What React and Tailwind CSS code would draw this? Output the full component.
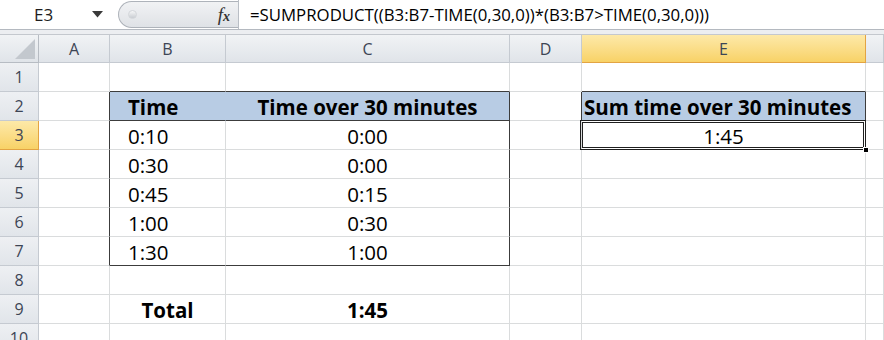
import React from 'react';

const GRID = 'border-[#dadcdd]';

// column letters shown in the header strip
const colHeads = ['A', 'B', 'C', 'D', 'E', ''];

const rows = [
  { n: 1 },
  { n: 2, b: 'Time', c: 'Time over 30 minutes', e: 'Sum time over 30 minutes' },
  { n: 3, b: '0:10', c: '0:00', e: '1:45' },
  { n: 4, b: '0:30', c: '0:00' },
  { n: 5, b: '0:45', c: '0:15' },
  { n: 6, b: '1:00', c: '0:30' },
  { n: 7, b: '1:30', c: '1:00' },
  { n: 8 },
  { n: 9, total: true },
  { n: 10 },
];

function Cell({ className = '', children }) {
  return (
    <div className={`h-[29px] pt-[2px] border-r border-b flex items-center overflow-visible whitespace-nowrap text-[20.5px] text-black ${className}`}>
      {children}
    </div>
  );
}

function FormulaBar() {
  return (
    <div className="h-[30px] flex bg-white border-b border-[#b4b9c0]">
      <div className="w-[112px] flex items-center text-[17px] text-[#1e1e1e]">
        <span className="ml-[34px]">E3</span>
        <svg className="ml-[39px]" width="11" height="7" viewBox="0 0 11 7">
          <path d="M0 0 L11 0 L5.5 6.5 Z" fill="#3a3a3a" />
        </svg>
      </div>
      <div className="ml-[6px] mt-[1px] h-[27px] w-[120px] rounded-l-[14px] border border-r-0 border-[#aeb3ba] bg-gradient-to-b from-[#f1f2f4] to-[#dfe2e6] flex items-center">
        <div className="ml-[9px] w-[9px] h-[9px] rounded-full bg-gradient-to-b from-[#f6f7f8] to-[#c9cdd2] border border-[#d3d6da]" />
        <span className="ml-auto mr-[8px] font-['Liberation_Serif',serif] italic text-[19px] text-[#333] leading-none">
          f<span className="text-[14px] font-bold">x</span>
        </span>
      </div>
      <div className="flex-1 flex items-center border-l border-[#b9bec5] pl-[11px] text-[16.8px] text-black whitespace-nowrap">
        =SUMPRODUCT((B3:B7-TIME(0,30,0))*(B3:B7&gt;TIME(0,30,0)))
      </div>
    </div>
  );
}

export default function App() {
  return (
    <div className="w-[884px] h-[340px] overflow-hidden bg-white font-['Open_Sans',sans-serif]">
      <FormulaBar />
      <div className="h-[5px] bg-[#eceef1] border-b border-[#c4c8ce]" />

      <div className="grid grid-cols-[39px_71px_116px_284px_72px_284px_1fr]">
        {/* header strip */}
        <div className="h-[28px] border-r border-b border-[#b7bcc3] bg-gradient-to-b from-[#f1f3f5] to-[#e0e4e9] flex items-end justify-end">
          <svg width="20" height="20" viewBox="0 0 20 20" className="mr-[3px] mb-[3px]">
            <path d="M20 0 L20 20 L0 20 Z" fill="#c3c8ce" />
          </svg>
        </div>
        {colHeads.map((h, i) =>
          h === 'E' ? (
            <div key={i} className="h-[28px] border-r border-b border-[#e3a443] bg-gradient-to-b from-[#fde9a8] to-[#f8d266] flex items-center justify-center text-[16px] text-[#3d4555]">
              {h}
            </div>
          ) : (
            <div key={i} className="h-[28px] border-r border-b border-[#c5cad1] bg-gradient-to-b from-[#f1f3f5] to-[#e0e4e9] flex items-center justify-center text-[16px] text-[#3d4555]">
              {h}
            </div>
          )
        )}

        {rows.map((r) => {
          const inTable = r.n >= 2 && r.n <= 7;
          const head = r.n === 2;
          return (
            <React.Fragment key={r.n}>
              {r.n === 3 ? (
                <div className="h-[29px] border-r border-b border-[#e3a443] bg-gradient-to-b from-[#fde9a8] to-[#f8d266] flex items-center justify-center text-[16px] text-[#3d4555]">
                  {r.n}
                </div>
              ) : (
                <div className="h-[29px] border-r border-b border-[#c5cad1] bg-gradient-to-b from-[#eef0f3] to-[#e1e5ea] flex items-center justify-center text-[16px] text-[#3d4555]">
                  {r.n}
                </div>
              )}

              {/* A */}
              <Cell className={`${GRID} ${inTable ? 'border-r-[#3c3c3c]' : ''}`} />

              {/* B */}
              <Cell
                className={`${GRID} ${r.n === 1 || r.n === 7 || head ? 'border-b-[#3c3c3c]' : ''} ${head ? 'bg-[#b8cce4] border-r-[#b8cce4] font-bold' : ''} ${r.total ? 'justify-center font-bold' : 'pl-[18px]'}`}
              >
                {r.total ? 'Total' : r.b}
              </Cell>

              {/* C */}
              <Cell
                className={`${GRID} justify-center ${inTable ? 'border-r-[#3c3c3c]' : ''} ${r.n === 1 || r.n === 7 || head ? 'border-b-[#3c3c3c]' : ''} ${head ? 'bg-[#b8cce4] font-bold' : ''} ${r.total ? 'font-bold' : ''}`}
              >
                {r.total ? '1:45' : r.c}
              </Cell>

              {/* D */}
              <Cell className={`${GRID} ${head ? 'border-r-[#3c3c3c]' : ''}`} />

              {/* E */}
              {r.n === 3 ? (
                <div className={`relative h-[29px] pt-[2px] border-r border-b ${GRID} flex items-center justify-center text-[20.5px] text-black`}>
                  {r.e}
                  <div className="absolute -left-[2px] -top-[1px] -right-[1px] -bottom-[1px] border-[3px] border-double border-[#1f1f1f]" />
                  <div className="absolute -right-[4px] -bottom-[4px] w-[6px] h-[6px] bg-black border border-white" />
                </div>
              ) : (
                <Cell
                  className={`${GRID} ${r.n === 1 ? 'border-b-[#3c3c3c]' : ''} ${head ? 'bg-[#b8cce4] font-bold pl-[2px] border-r-[#3c3c3c] border-b-[#3c3c3c]' : ''}`}
                >
                  {r.e}
                </Cell>
              )}

              {/* F */}
              <Cell className={GRID} />
            </React.Fragment>
          );
        })}
      </div>
    </div>
  );
}
